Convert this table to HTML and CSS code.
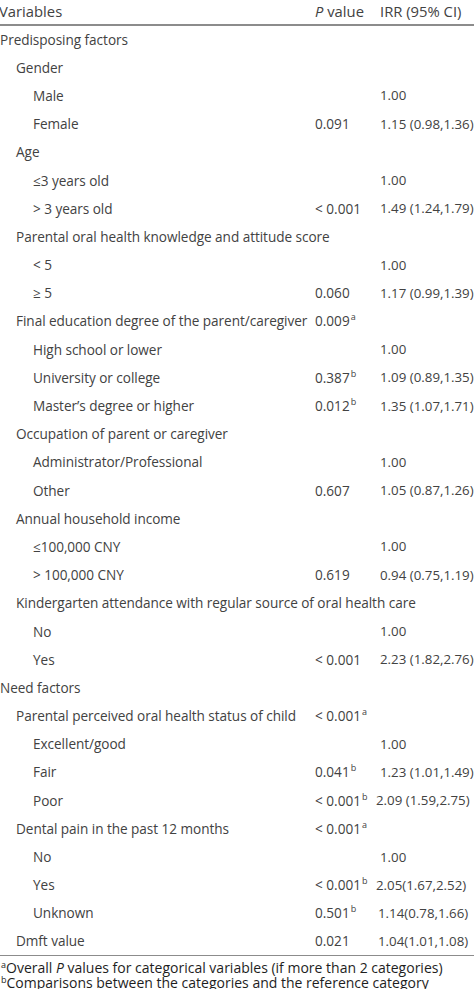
FILE: index.html
```html
<!DOCTYPE html>
<html lang="en">
<head>
<meta charset="utf-8">
<title>IRR table</title>
<link rel="stylesheet" href="styles.css">
</head>
<body>
<div class="wrap">
<table class="tbl">
  <thead>
    <tr><th class="c1">Variables</th><th class="c2"><i>P</i> value</th><th class="c3">IRR (95% CI)</th></tr>
  </thead>
  <tbody>
    <tr><td class="l0">Predisposing factors</td><td></td><td></td></tr>
    <tr><td class="l1">Gender</td><td></td><td></td></tr>
    <tr><td class="l2">Male</td><td></td><td class="irr">1.00</td></tr>
    <tr><td class="l2">Female</td><td>0.091</td><td class="irr">1.15 (0.98,1.36)</td></tr>
    <tr><td class="l1">Age</td><td></td><td></td></tr>
    <tr><td class="l2">≤3 years old</td><td></td><td class="irr">1.00</td></tr>
    <tr><td class="l2">&gt; 3 years old</td><td>&lt; 0.001</td><td class="irr">1.49 (1.24,1.79)</td></tr>
    <tr><td class="l1">Parental oral health knowledge and attitude score</td><td></td><td></td></tr>
    <tr><td class="l2">&lt; 5</td><td></td><td class="irr">1.00</td></tr>
    <tr><td class="l2">≥ 5</td><td>0.060</td><td class="irr">1.17 (0.99,1.39)</td></tr>
    <tr><td class="l1">Final education degree of the parent/caregiver</td><td>0.009<sup>a</sup></td><td></td></tr>
    <tr><td class="l2">High school or lower</td><td></td><td class="irr">1.00</td></tr>
    <tr><td class="l2">University or college</td><td>0.387<sup>b</sup></td><td class="irr">1.09 (0.89,1.35)</td></tr>
    <tr><td class="l2">Master’s degree or higher</td><td>0.012<sup>b</sup></td><td class="irr">1.35 (1.07,1.71)</td></tr>
    <tr><td class="l1">Occupation of parent or caregiver</td><td></td><td></td></tr>
    <tr><td class="l2">Administrator/Professional</td><td></td><td class="irr">1.00</td></tr>
    <tr><td class="l2">Other</td><td>0.607</td><td class="irr">1.05 (0.87,1.26)</td></tr>
    <tr><td class="l1">Annual household income</td><td></td><td></td></tr>
    <tr><td class="l2">≤100,000 CNY</td><td></td><td class="irr">1.00</td></tr>
    <tr><td class="l2">&gt; 100,000 CNY</td><td>0.619</td><td class="irr">0.94 (0.75,1.19)</td></tr>
    <tr><td class="l1" colspan="3">Kindergarten attendance with regular source of oral health care</td></tr>
    <tr><td class="l2">No</td><td></td><td class="irr">1.00</td></tr>
    <tr><td class="l2">Yes</td><td>&lt; 0.001</td><td class="irr">2.23 (1.82,2.76)</td></tr>
    <tr><td class="l0">Need factors</td><td></td><td></td></tr>
    <tr><td class="l1">Parental perceived oral health status of child</td><td>&lt; 0.001<sup>a</sup></td><td></td></tr>
    <tr><td class="l2">Excellent/good</td><td></td><td class="irr">1.00</td></tr>
    <tr><td class="l2">Fair</td><td>0.041<sup>b</sup></td><td class="irr">1.23 (1.01,1.49)</td></tr>
    <tr><td class="l2">Poor</td><td>&lt; 0.001<sup>b</sup></td><td class="irr tight">2.09 (1.59,2.75)</td></tr>
    <tr><td class="l1">Dental pain in the past 12 months</td><td>&lt; 0.001<sup>a</sup></td><td></td></tr>
    <tr><td class="l2">No</td><td></td><td class="irr">1.00</td></tr>
    <tr><td class="l2">Yes</td><td>&lt; 0.001<sup>b</sup></td><td class="irr tight">2.05(1.67,2.52)</td></tr>
    <tr><td class="l2">Unknown</td><td>0.501<sup>b</sup></td><td class="irr tight2">1.14(0.78,1.66)</td></tr>
    <tr><td class="l1">Dmft value</td><td>0.021</td><td class="irr tight2">1.04(1.01,1.08)</td></tr>
  </tbody>
</table>
<div class="notes">
  <p><sup>a</sup>Overall <i>P</i> values for categorical variables (if more than 2 categories)</p>
  <p><sup>b</sup>Comparisons between the categories and the reference category</p>
</div>
</div>
</body>
</html>
```

FILE: styles.css
```css
html, body {
  margin: 0;
  padding: 0;
  background: #ffffff;
}
body {
  width: 474px;
  height: 989px;
  overflow: hidden;
  font-family: "Open Sans", "DejaVu Sans", sans-serif;
  color: #424242;
}
.wrap {
  margin-left: -1px;
}
.tbl {
  border-collapse: collapse;
  width: 476px;
  table-layout: fixed;
  font-size: 13.6px;
}
.tbl th, .tbl td {
  padding: 0;
  white-space: nowrap;
  text-align: left;
  font-weight: 400;
  vertical-align: middle;
}
.tbl th {
  font-size: 14.8px;
}
.tbl th.c1 { width: 316px; }
.tbl th.c2 { width: 65px; }
.tbl thead tr {
  height: 25px;
  border-bottom: 2px solid #8c8c8c;
}
.tbl thead th {
  padding-bottom: 2px;
}
.tbl tbody tr {
  height: 28.2px;
}
.tbl tbody tr:last-child {
  border-bottom: 1px solid #8c8c8c;
}
.l0, .l1, .l2 {
  font-size: 13.6px;
  letter-spacing: -0.05px;
}
.l0 { padding-left: 1px !important; }
.l1 { padding-left: 17px !important; }
.l2 { padding-left: 34px !important; }
.tbl td.irr { font-size: 13.3px; }
.tbl td.tight { position: relative; left: -4px; }
.tbl td.tight2 { position: relative; left: -2px; }
sup {
  font-size: 9px;
  line-height: 0;
  vertical-align: 6px;
  margin-left: 1px;
}
.notes {
  font-size: 14px;
  color: #1e1e1e;
  padding-top: 4px;
  margin-left: 2px;
}
.notes p {
  margin: 0;
  line-height: 15px;
  white-space: nowrap;
}
.notes sup {
  font-size: 9px;
  margin-left: 0;
  vertical-align: 5px;
}
```
